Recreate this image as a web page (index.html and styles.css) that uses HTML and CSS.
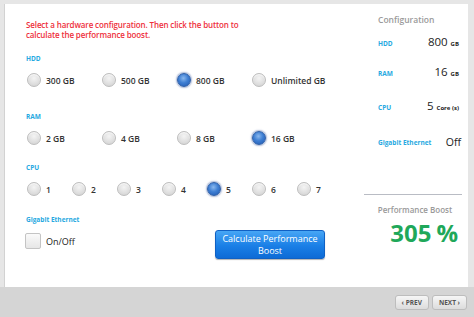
FILE: index.html
```html
<!DOCTYPE html>
<html>
<head>
<meta charset="utf-8">
<link rel="stylesheet" href="styles.css">
</head>
<body>
<div class="page">
  <div class="panel">
    <div class="main">
      <p class="intro">Select a hardware configuration. Then click the button to<br>calculate the performance boost.</p>

      <div class="group g-hdd">
        <div class="label">HDD</div>
        <div class="row cols4">
          <div class="opt"><span class="radio"></span>300 GB</div>
          <div class="opt"><span class="radio"></span>500 GB</div>
          <div class="opt"><span class="radio on"></span>800 GB</div>
          <div class="opt"><span class="radio"></span>Unlimited GB</div>
        </div>
      </div>

      <div class="group g-ram">
        <div class="label">RAM</div>
        <div class="row cols4">
          <div class="opt"><span class="radio"></span>2 GB</div>
          <div class="opt"><span class="radio"></span>4 GB</div>
          <div class="opt"><span class="radio"></span>8 GB</div>
          <div class="opt"><span class="radio on"></span>16 GB</div>
        </div>
      </div>

      <div class="group g-cpu">
        <div class="label">CPU</div>
        <div class="row cols7">
          <div class="opt"><span class="radio"></span>1</div>
          <div class="opt"><span class="radio"></span>2</div>
          <div class="opt"><span class="radio"></span>3</div>
          <div class="opt"><span class="radio"></span>4</div>
          <div class="opt"><span class="radio on"></span>5</div>
          <div class="opt"><span class="radio"></span>6</div>
          <div class="opt"><span class="radio"></span>7</div>
        </div>
      </div>

      <div class="last">
        <div class="group g-ge">
          <div class="label">Gigabit Ethernet</div>
          <div class="opt"><span class="check"></span>On/Off</div>
        </div>
        <button class="calc">Calculate Performance<br>Boost</button>
      </div>
    </div>

    <div class="side">
      <div class="side-title">Configuration</div>
      <div class="cfg c-hdd"><span class="k">HDD</span><span class="v">800 <small>GB</small></span></div>
      <div class="cfg c-ram"><span class="k">RAM</span><span class="v">16 <small>GB</small></span></div>
      <div class="cfg c-cpu"><span class="k">CPU</span><span class="v">5 <small>Core (s)</small></span></div>
      <div class="cfg c-ge"><span class="k">Gigabit Ethernet</span><span class="v">Off</span></div>
      <div class="rule"></div>
      <div class="boost-title">Performance Boost</div>
      <div class="boost">305<span class="pct">%</span></div>
    </div>
  </div>
  <div class="footer">
    <button class="nav">&#8249; PREV</button>
    <button class="nav">NEXT &#8250;</button>
  </div>
</div>
</body>
</html>
```

FILE: styles.css
```css
* { box-sizing: border-box; }
html, body { margin: 0; padding: 0; }
body {
  width: 474px;
  height: 317px;
  background: #e6e6e6;
  font-family: "Open Sans", "Noto Sans", sans-serif;
  overflow: hidden;
}
.page {
  height: 317px;
  padding: 4px 6px 0 4px;
  display: flex;
  flex-direction: column;
}
.panel {
  height: 283px;
  background: #fff;
  border-left: 1px solid #d2d2d2;
  display: flex;
}
.main {
  width: 358px;
  padding: 16px 38px 0 21px;
}
.intro {
  margin: 0;
  color: #ee2f3b;
  font-size: 8px;
  line-height: 10px;
  font-weight: 600;
  letter-spacing: -0.12px;
}
.label {
  color: #27a9e1;
  font-size: 6.5px;
  font-weight: 700;
  height: 10px;
  line-height: 10px;
}
.g-hdd { margin-top: 14px; }
.g-ram { margin-top: 24px; }
.g-cpu { margin-top: 17px; }
.row {
  margin-top: 8px;
  display: grid;
}
.cols4 { grid-template-columns: 75px 75px 75px 75px; }
.cols7 { grid-template-columns: repeat(7, 45px); }
.opt {
  display: flex;
  align-items: center;
  height: 16px;
  font-size: 8.5px;
  font-weight: 600;
  color: #333;
}
.radio {
  width: 14px;
  height: 14px;
  border-radius: 50%;
  margin: 0 5px 0 1px;
  border: 1px solid #bdbdbd;
  background: radial-gradient(circle at 50% 35%, #f4f4f4 0%, #dedede 60%, #cfcfcf 100%);
  box-shadow: inset 0 1px 1px rgba(255,255,255,.8);
  flex: none;
}
.radio.on {
  border: 1px solid #2e5fa8;
  background: radial-gradient(circle at 45% 35%, #8ab8ee 0%, #3f7fd3 45%, #1f58b0 100%);
  box-shadow: 0 0 1.5px 1px rgba(60,90,160,.45);
}
.last {
  margin-top: 18px;
  display: flex;
  justify-content: space-between;
  align-items: flex-start;
}
.g-ge .opt {
  margin-top: 8px;
  font-weight: 400;
  font-size: 9px;
  color: #222;
}
.check {
  width: 16px;
  height: 16px;
  border: 1px solid #c4c4c4;
  border-radius: 2px;
  background: linear-gradient(#fafafa, #e6e6e6);
  margin: 0 5px 0 -1px;
  flex: none;
}
.calc {
  margin-top: 15px;
  width: 110px;
  height: 29px;
  border: 1px solid #1061c4;
  border-radius: 3px;
  background: linear-gradient(#47a6f5, #1a7fe6 55%, #0e6bd6);
  box-shadow: 0 1px 1px rgba(0,0,0,.3);
  color: #fff;
  font-family: "Open Sans", "Noto Sans", sans-serif;
  font-size: 9px;
  line-height: 12px;
  font-weight: 400;
  padding: 0;
}
.side {
  width: 106px;
  padding: 10px 6px 0 1px;
}
.side-title {
  padding-left: 14px;
  color: #9a9a9a;
  font-size: 8.5px;
  font-weight: 600;
  line-height: 12px;
}
.cfg {
  display: flex;
  justify-content: space-between;
  align-items: center;
  padding: 0 3px 0 14px;
  height: 14px;
}
.c-hdd { margin-top: 10px; }
.c-ram { margin-top: 16px; }
.c-cpu { margin-top: 20px; }
.c-ge { margin-top: 21px; }
.k {
  color: #27a9e1;
  font-size: 6.5px;
  font-weight: 700;
}
.v {
  color: #222;
  font-size: 11.5px;
  position: relative;
  top: -2px;
}
.v small {
  font-size: 6px;
  font-weight: 700;
}
.c-ge .v { top: 0; font-size: 10.5px; margin-right: -2px; }
.rule {
  margin-top: 45px;
  height: 1px;
  background: #b9bcc4;
}
.boost-title {
  margin-top: 9px;
  padding-left: 4px;
  text-align: center;
  color: #999;
  font-size: 8px;
  font-weight: 600;
}
.boost {
  margin-top: 4px;
  text-align: right;
  padding-right: 4px;
  color: #1fa85a;
  font-size: 24px;
  font-weight: 700;
  line-height: 28px;
}
.pct { margin-left: 5px; }
.footer {
  flex: 1;
  background: #d5d5d5;
  display: flex;
  justify-content: flex-end;
  align-items: flex-start;
  padding: 8px 7px 0 0;
  gap: 3px;
  margin-right: -6px;
  margin-left: -4px;
}
.nav {
  height: 15px;
  padding: 0 6px;
  border: 1px solid #bdbdbd;
  border-radius: 3px;
  background: linear-gradient(#f6f6f6, #dcdcdc);
  color: #555;
  font-family: "Open Sans", "Noto Sans", sans-serif;
  font-size: 6.5px;
  font-weight: 700;
  line-height: 13px;
}
```
